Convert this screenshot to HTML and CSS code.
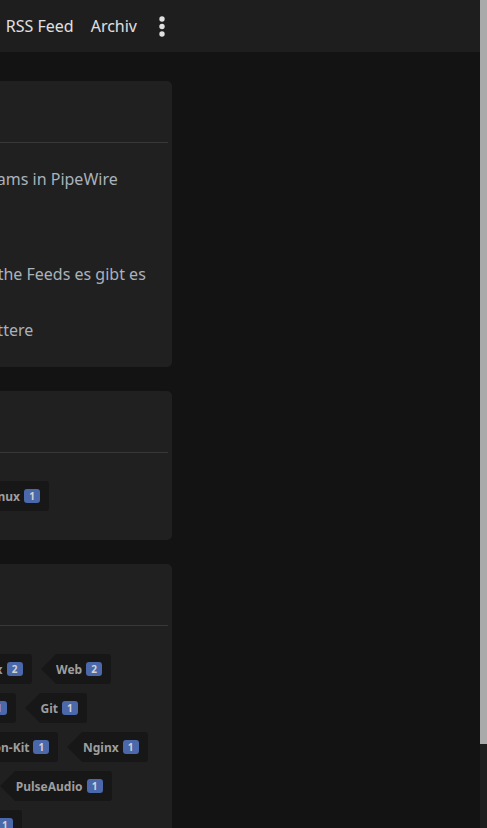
FILE: index.html
```html
<!DOCTYPE html>
<html lang="de">
<head>
    <meta charset="UTF-8">
    <meta name="viewport" content="width=device-width, initial-scale=1.0">
    <title>Blog</title>
    <link rel="stylesheet" href="styles.css">
</head>
<body>
    <nav class="navbar">
        <div class="nav-inner">
            <a class="nav-link" href="#">RSS Feed</a>
            <a class="nav-link" href="#">Archiv</a>
            <button class="nav-more" aria-label="Mehr">
                <svg width="6" height="21" viewBox="0 0 6 21"><circle cx="3" cy="3" r="2.7"/><circle cx="3" cy="10.5" r="2.7"/><circle cx="3" cy="18" r="2.7"/></svg>
            </button>
        </div>
    </nav>

    <div class="layout">
        <aside class="sidebar">
            <section class="card">
                <h3 class="card-header">Über diesen Blog</h3>
                <div class="card-body">
                    <p>Geräuschfilter auf Streams in PipeWire<br>und mehr.</p>
                    <p>Abonnieren:<br>Per RSS bekommst du the Feeds es gibt es<br>auch als Atom.<br>Oder nur im Archiv blättere</p>
                </div>
            </section>

            <section class="card">
                <h3 class="card-header">Kategorien</h3>
                <div class="card-body tag-body">
                    <div class="tags">
                        <a class="tag" href="#">Administration <span class="badge">1</span></a>
                        <a class="tag" href="#">Linux <span class="badge">1</span></a>
                    </div>
                </div>
            </section>

            <section class="card">
                <h3 class="card-header">Tags</h3>
                <div class="card-body tag-body">
                    <div class="tags">
                        <a class="tag" href="#">Markdown <span class="badge">1</span></a>
                        <a class="tag" href="#">Firefox <span class="badge">2</span></a>
                        <a class="tag" href="#">Web <span class="badge">2</span></a>
                        <a class="tag" href="#">Docker <span class="badge">1</span></a>
                        <a class="tag" href="#">Android <span class="badge">1</span></a>
                        <a class="tag" href="#">Git <span class="badge">1</span></a>
                        <a class="tag" href="#">Kubernetes <span class="badge">1</span></a>
                        <a class="tag" href="#">Python-Kit <span class="badge">1</span></a>
                        <a class="tag" href="#">Nginx <span class="badge">1</span></a>
                        <a class="tag" href="#">Vim <span class="badge">1</span></a>
                        <a class="tag" href="#">Debian <span class="badge">1</span></a>
                        <a class="tag" href="#">PulseAudio <span class="badge">1</span></a>
                        <a class="tag" href="#">Raspberry <span class="badge">1</span></a>
                        <a class="tag" href="#">Audio <span class="badge">1</span></a>
                        <a class="tag" href="#">Programmierung <span class="badge">1</span></a>
                        <a class="tag" href="#">Bash <span class="badge">1</span></a>
                        <a class="tag" href="#">SSH <span class="badge">1</span></a>
                    </div>
                </div>
            </section>
        </aside>
    </div>

    <div class="scrollbar"><div class="scrollbar-thumb"></div></div>
</body>
</html>
```

FILE: styles.css
```css
body {
    font-family: 'Noto Sans', sans-serif;
    background-color: #131313;
    color: #aab2bb;
    margin: 0;
    font-size: 16px;
}
a {
    text-decoration: none;
}
.navbar {
    background-color: #1e1e1e;
    height: 52px;
}
.nav-inner {
    display: flex;
    justify-content: flex-end;
    align-items: center;
    height: 100%;
    padding-right: 322px;
    gap: 17px;
}
.nav-link {
    color: #e0e0e0;
    white-space: nowrap;
}
.nav-more {
    background: none;
    border: 0;
    padding: 0;
    margin-left: 5px;
    display: flex;
    fill: #e0e0e0;
}
.layout {
    display: flex;
    justify-content: flex-end;
    padding: 29px 315px 13px 0;
}
.sidebar {
    flex: 0 0 360px;
    display: flex;
    flex-direction: column;
    gap: 24px;
}
.card {
    background-color: #202020;
    border-radius: 5px;
}
.card-header {
    margin: 0 4px;
    padding: 0 12px;
    height: 61px;
    line-height: 61px;
    font-size: 20px;
    font-weight: normal;
    color: #e0e0e0;
    border-bottom: 1px solid #383838;
    white-space: nowrap;
}
.card-body {
    padding: 22px 16px 23px;
}
.card-body p {
    margin: 0;
    line-height: 28px;
    white-space: nowrap;
}
.card-body p + p {
    margin-top: 11px;
}
.tag-body {
    padding: 28px 16px 29px;
}
.tags {
    display: flex;
    flex-wrap: wrap;
    gap: 9px 24px;
    padding-left: 15px;
}
.tag {
    position: relative;
    display: inline-flex;
    align-items: center;
    height: 30px;
    padding: 0 9px 0 0.5px;
    gap: 4px;
    background-color: #171717;
    border-radius: 0 3px 3px 0;
    color: #9e9e9e;
    font-size: 12px;
    font-weight: bold;
    white-space: nowrap;
}
.tag::before {
    content: "";
    position: absolute;
    left: -15px;
    top: 0;
    border-right: 15px solid #171717;
    border-top: 15px solid transparent;
    border-bottom: 15px solid transparent;
}
.badge {
    display: inline-block;
    width: 16px;
    height: 14px;
    line-height: 14px;
    text-align: center;
    border-radius: 3px;
    background-color: #4a68aa;
    color: #d2d2d2;
    font-size: 10px;
}

/* Scrollleiste wie im Browser */
.scrollbar {
    position: fixed;
    top: 0;
    right: 0;
    width: 7px;
    height: 100vh;
    background-color: #1f1f1f;
}
.scrollbar-thumb {
    height: 744px;
    background-color: #aaaaaa;
}
```
